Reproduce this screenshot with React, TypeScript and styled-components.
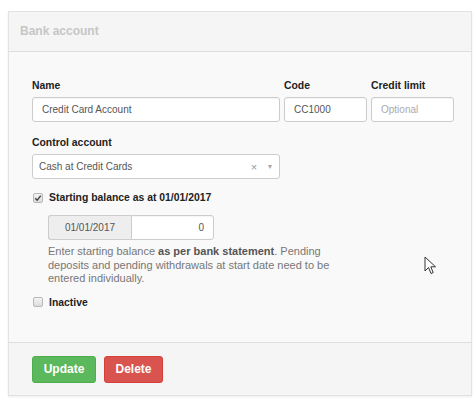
import React from "react";
import styled, { createGlobalStyle } from "styled-components";

const GlobalStyle = createGlobalStyle`
  html, body {
    margin: 0;
    padding: 0;
    background: #ffffff;
    font-family: "Liberation Sans", Arial, sans-serif;
    font-size: 11px;
    color: #333333;
  }
  * {
    box-sizing: border-box;
  }
`;

const Page = styled.div`
  position: relative;
  width: 474px;
  height: 409px;
  padding: 11px 2px 0 8px;
`;

const Panel = styled.div`
  border: 1px solid #e2e2e2;
  box-shadow: 0 1px 2px rgba(0, 0, 0, 0.08);
`;

const PanelHeader = styled.div`
  height: 40px;
  padding-left: 11px;
  background: #f5f5f5;
  border-bottom: 1px solid #dedede;
  font-size: 12px;
  font-weight: bold;
  line-height: 39px;
  color: #c6c6c6;
`;

const PanelBody = styled.div`
  background: #f9f9f9;
  padding: 26px 23px 32px;
`;

const Row = styled.div<{ $mb: number }>`
  display: flex;
  gap: 4px;
  margin-bottom: ${(p) => p.$mb}px;
`;

const Field = styled.div<{ $width: number }>`
  flex-shrink: 0;
  width: ${(p) => p.$width}px;
`;

const Label = styled.label`
  display: block;
  font-weight: bold;
  font-size: 10.4px;
  line-height: 15px;
  margin-bottom: 4px;
  color: #222222;
`;

const TextInput = styled.input<{ $align?: string }>`
  display: block;
  width: 100%;
  height: 25px;
  padding: 0 9px;
  border: 1px solid #cccccc;
  border-radius: 3px;
  background: #ffffff;
  font-family: inherit;
  font-size: 10px;
  color: #555555;
  text-align: ${(p) => p.$align || "left"};
  box-shadow: inset 0 1px 1px rgba(0, 0, 0, 0.04);

  &::placeholder {
    color: #aaaaaa;
  }
`;

const SelectBox = styled.div`
  display: flex;
  align-items: center;
  width: 248px;
  height: 25px;
  padding: 0 0 0 6px;
  border: 1px solid #cccccc;
  border-radius: 3px;
  background: #ffffff;
  font-size: 10px;
  color: #555555;
`;

const SelectValue = styled.span`
  flex: 1;
`;

const ClearMark = styled.span`
  width: 14px;
  text-align: center;
  color: #999999;
  font-size: 11px;
`;

const Caret = styled.span`
  width: 18px;
  text-align: center;
  color: #aaaaaa;
  font-size: 7px;
`;

const CheckRow = styled.div<{ $mb: number }>`
  display: flex;
  align-items: center;
  gap: 6px;
  height: 15px;
  margin-bottom: ${(p) => p.$mb}px;
  font-size: 10.4px;
  font-weight: bold;
  color: #222222;
`;

const CheckBox = styled.span`
  display: flex;
  align-items: center;
  justify-content: center;
  width: 10px;
  height: 10px;
  margin-left: 1px;
  border: 1px solid #b8b8b8;
  border-radius: 2px;
  background: linear-gradient(#f4f4f4, #dcdcdc);
`;

const Indent = styled.div`
  padding-left: 16px;
`;

const InputGroup = styled.div`
  display: flex;
  width: 166px;
  height: 25px;
`;

const Addon = styled.span`
  display: flex;
  align-items: center;
  justify-content: center;
  width: 83px;
  border: 1px solid #cccccc;
  border-right: none;
  border-radius: 3px 0 0 3px;
  background: #eeeeee;
  font-size: 10px;
  color: #555555;
`;

const GroupInput = styled(TextInput)`
  width: 83px;
  border-radius: 0 3px 3px 0;
`;

const HelpText = styled.p`
  margin: 5px 0 9px;
  width: 300px;
  line-height: 13.5px;
  color: #777777;

  b {
    color: #555555;
  }
`;

const PanelFooter = styled.div`
  display: flex;
  gap: 8px;
  padding: 13px 23px 12px;
  background: #f5f5f5;
  border-top: 1px solid #dedede;
`;

const Button = styled.button<{ $color: string; $border: string; $width: number }>`
  width: ${(p) => p.$width}px;
  height: 27px;
  border: 1px solid ${(p) => p.$border};
  border-radius: 3px;
  background: ${(p) => p.$color};
  color: #ffffff;
  font-family: "Liberation Sans", Arial, sans-serif;
  font-weight: bold;
  font-size: 12px;
  cursor: pointer;
`;

const Cursor = styled.svg`
  position: absolute;
  left: 424px;
  top: 256px;
`;

export default function App() {
  return (
    <Page>
      <GlobalStyle />
      <Panel>
        <PanelHeader>Bank account</PanelHeader>
        <PanelBody>
          <Row $mb={13}>
            <Field $width={248}>
              <Label>Name</Label>
              <TextInput defaultValue="Credit Card Account" />
            </Field>
            <Field $width={83}>
              <Label>Code</Label>
              <TextInput defaultValue="CC1000" />
            </Field>
            <Field $width={83}>
              <Label>Credit limit</Label>
              <TextInput placeholder="Optional" />
            </Field>
          </Row>
          <Row $mb={11}>
            <Field $width={248}>
              <Label>Control account</Label>
              <SelectBox>
                <SelectValue>Cash at Credit Cards</SelectValue>
                <ClearMark>×</ClearMark>
                <Caret>▼</Caret>
              </SelectBox>
            </Field>
          </Row>
          <CheckRow $mb={10}>
            <CheckBox>
              <svg width="8" height="8" viewBox="0 0 8 8">
                <path d="M1.2 4.2 L3.2 6.2 L6.8 1.6" fill="none" stroke="#444" strokeWidth="1.5" />
              </svg>
            </CheckBox>
            Starting balance as at 01/01/2017
          </CheckRow>
          <Indent>
            <InputGroup>
              <Addon>01/01/2017</Addon>
              <GroupInput $align="right" defaultValue="0" />
            </InputGroup>
            <HelpText>
              Enter starting balance <b>as per bank statement</b>. Pending deposits and pending
              withdrawals at start date need to be entered individually.
            </HelpText>
          </Indent>
          <CheckRow $mb={0}>
            <CheckBox />
            Inactive
          </CheckRow>
        </PanelBody>
        <PanelFooter>
          <Button $color="#5cb85c" $border="#4cae4c" $width={64}>
            Update
          </Button>
          <Button $color="#d9534f" $border="#d43f3a" $width={59}>
            Delete
          </Button>
        </PanelFooter>
      </Panel>
      <Cursor width="14" height="20" viewBox="0 0 14 20">
        <path
          d="M1 1 L1 15 L4.5 11.5 L7 17.5 L9.2 16.6 L6.8 10.8 L11.5 10.8 Z"
          fill="#ffffff"
          stroke="#333333"
          strokeWidth="1"
          strokeLinejoin="round"
        />
      </Cursor>
    </Page>
  );
}
